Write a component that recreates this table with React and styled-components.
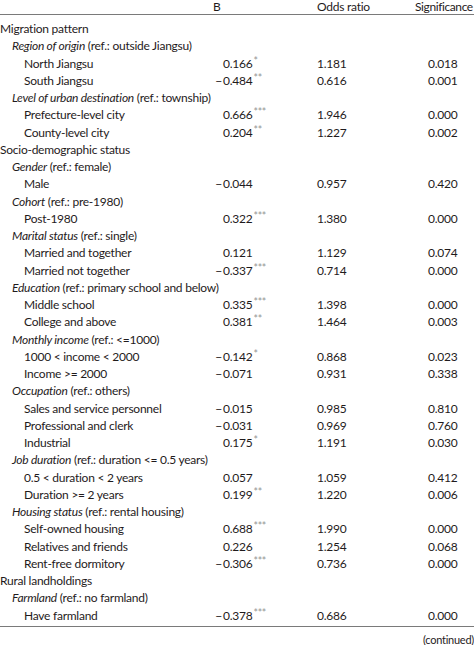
import styled, { createGlobalStyle } from "styled-components";

const GlobalStyle = createGlobalStyle`
  html, body {
    margin: 0;
    padding: 0;
    background: #ffffff;
  }
  body {
    font-family: Lato, "Open Sans", sans-serif;
    color: #1f1b1c;
  }
`;

const Page = styled.div`
  width: 474px;
  height: 645px;
  overflow: hidden;
  font-size: 12px;
  letter-spacing: -0.25px;
`;

const HeaderRow = styled.div`
  display: grid;
  grid-template-columns: 210px 107px 98px 59px;
  height: 14px;
  line-height: 14px;
  border-bottom: 1.5px solid #7a7a7a;
  margin-bottom: 5px;
`;

const HeadCell = styled.div`
  padding-left: ${(p) => p.$pad || 0}px;
  letter-spacing: ${(p) => (p.$tight ? "-0.4px" : "inherit")};
  white-space: nowrap;
`;

const Body = styled.div`
  border-bottom: 1.5px solid #7a7a7a;
  padding-bottom: 2px;
`;

const Row = styled.div`
  display: grid;
  grid-template-columns: 210px 107px 101px 56px;
  height: 17.26px;
  line-height: 17.26px;
  white-space: nowrap;
`;

const Label = styled.div`
  padding-left: ${(p) => p.$level * 12}px;
`;

const Em = styled.span`
  font-style: italic;
`;

const Value = styled.div`
  display: flex;
  padding-left: ${(p) => p.$pad || 0}px;
`;

const Sign = styled.span`
  width: 12px;
  text-align: right;
  padding-right: 1px;
`;

const Star = styled.span`
  font-size: 10.5px;
  color: #969696;
  line-height: 13px;
  margin-left: 1px;
`;

const Continued = styled.div`
  text-align: right;
  font-size: 11px;
  padding-top: 6px;
`;

const rows = [
  { label: "Migration pattern", level: 0 },
  { cat: "Region of origin", ref: "(ref.: outside Jiangsu)" },
  { label: "North Jiangsu", b: "0.166", s: "*", o: "1.181", p: "0.018" },
  { label: "South Jiangsu", b: "−0.484", s: "**", o: "0.616", p: "0.001" },
  { cat: "Level of urban destination", ref: "(ref.: township)" },
  { label: "Prefecture-level city", b: "0.666", s: "***", o: "1.946", p: "0.000" },
  { label: "County-level city", b: "0.204", s: "**", o: "1.227", p: "0.002" },
  { label: "Socio-demographic status", level: 0 },
  { cat: "Gender", ref: "(ref.: female)" },
  { label: "Male", b: "−0.044", o: "0.957", p: "0.420" },
  { cat: "Cohort", ref: "(ref.: pre-1980)" },
  { label: "Post-1980", b: "0.322", s: "***", o: "1.380", p: "0.000" },
  { cat: "Marital status", ref: "(ref.: single)" },
  { label: "Married and together", b: "0.121", o: "1.129", p: "0.074" },
  { label: "Married not together", b: "−0.337", s: "***", o: "0.714", p: "0.000" },
  { cat: "Education", ref: "(ref.: primary school and below)" },
  { label: "Middle school", b: "0.335", s: "***", o: "1.398", p: "0.000" },
  { label: "College and above", b: "0.381", s: "**", o: "1.464", p: "0.003" },
  { cat: "Monthly income", ref: "(ref.: <=1000)" },
  { label: "1000 < income < 2000", b: "−0.142", s: "*", o: "0.868", p: "0.023" },
  { label: "Income >= 2000", b: "−0.071", o: "0.931", p: "0.338" },
  { cat: "Occupation", ref: "(ref.: others)" },
  { label: "Sales and service personnel", b: "−0.015", o: "0.985", p: "0.810" },
  { label: "Professional and clerk", b: "−0.031", o: "0.969", p: "0.760" },
  { label: "Industrial", b: "0.175", s: "*", o: "1.191", p: "0.030" },
  { cat: "Job duration", ref: "(ref.: duration <= 0.5 years)" },
  { label: "0.5 < duration < 2 years", b: "0.057", o: "1.059", p: "0.412" },
  { label: "Duration >= 2 years", b: "0.199", s: "**", o: "1.220", p: "0.006" },
  { cat: "Housing status", ref: "(ref.: rental housing)" },
  { label: "Self-owned housing", b: "0.688", s: "***", o: "1.990", p: "0.000" },
  { label: "Relatives and friends", b: "0.226", o: "1.254", p: "0.068" },
  { label: "Rent-free dormitory", b: "−0.306", s: "***", o: "0.736", p: "0.000" },
  { label: "Rural landholdings", level: 0 },
  { cat: "Farmland", ref: "(ref.: no farmland)" },
  { label: "Have farmland", b: "−0.378", s: "***", o: "0.686", p: "0.000" },
];

const BValue = ({ b, s }) => {
  const neg = b.startsWith("−");
  return (
    <Value>
      <Sign>{neg ? "−" : ""}</Sign>
      <span>{neg ? b.slice(1) : b}</span>
      {s && <Star>{s}</Star>}
    </Value>
  );
};

const TableRow = ({ r }) => {
  if (r.cat) {
    return (
      <Row>
        <Label $level={1}>
          <Em>{r.cat}</Em> {r.ref}
        </Label>
      </Row>
    );
  }
  if (r.b === undefined) {
    return (
      <Row>
        <Label $level={0}>{r.label}</Label>
      </Row>
    );
  }
  return (
    <Row>
      <Label $level={2}>{r.label}</Label>
      <BValue b={r.b} s={r.s} />
      <Value>{r.o}</Value>
      <Value $pad={10}>{r.p}</Value>
    </Row>
  );
};

export default function App() {
  return (
    <Page>
      <GlobalStyle />
      <HeaderRow>
        <HeadCell />
        <HeadCell $pad={3}>B</HeadCell>
        <HeadCell>Odds ratio</HeadCell>
        <HeadCell $tight>Significance</HeadCell>
      </HeaderRow>
      <Body>
        {rows.map((r, i) => (
          <TableRow key={i} r={r} />
        ))}
      </Body>
      <Continued>(continued)</Continued>
    </Page>
  );
}
